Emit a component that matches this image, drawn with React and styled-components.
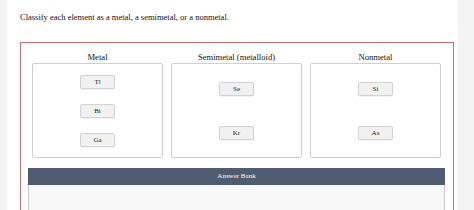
import React from "react";
import styled, { createGlobalStyle } from "styled-components";

const Global = createGlobalStyle`
  html, body { margin: 0; padding: 0; background: #f3f3f3; }
  body {
    font-family: "Liberation Serif", "Times New Roman", serif;
    color: #222;
    -webkit-font-smoothing: antialiased;
  }
`;

const Shell = styled.div`
  display: flex;
  width: 474px;
  height: 210px;
  overflow: hidden;
  background: #f3f3f3;
`;

const Page = styled.div`
  margin-left: 7px;
  width: 451px;
  background: #fff;
  padding: 11px 0 0 13px;
  box-sizing: border-box;
`;

const Title = styled.p`
  margin: 0;
  font-size: 8.5px;
  line-height: 12px;
  color: #111;
`;

const Frame = styled.div`
  margin-top: 19px;
  width: 434px;
  height: 200px;
  box-sizing: border-box;
  border: 1px solid #cf6b72;
  padding: 8px 8px 0 7px;
`;

const Columns = styled.div`
  display: grid;
  grid-template-columns: repeat(3, 131px);
  column-gap: 8px;
  padding-left: 4px;
`;

const Column = styled.div`
  display: flex;
  flex-direction: column;
`;

const Heading = styled.div`
  text-align: center;
  font-size: 8.6px;
  line-height: 12px;
  height: 12px;
  color: #111;
`;

const Zone = styled.div`
  height: 95px;
  box-sizing: border-box;
  border: 1px solid #cfcfcf;
  border-radius: 2px;
  display: flex;
  flex-direction: column;
  align-items: center;
  padding-top: ${(p) => p.$top}px;
  gap: ${(p) => p.$gap}px;
`;

const Tile = styled.div`
  width: 35px;
  height: 14px;
  box-sizing: border-box;
  border: 1px solid #d3d3d3;
  border-radius: 2px;
  background: #f1f1f1;
  box-shadow: 0 1px 1px rgba(0, 0, 0, 0.06);
  font-size: 7px;
  line-height: 12px;
  text-align: center;
  color: #222;
`;

const Bank = styled.div`
  margin-top: 10px;
  width: 417px;
  box-sizing: border-box;
  border: 1px solid #c9c9c9;
  border-top: none;
`;

const BankHeader = styled.div`
  height: 17px;
  background: #4e5b70;
  color: #fff;
  font-size: 7px;
  line-height: 17px;
  text-align: center;
  margin: 0 -1px;
`;

const BankBody = styled.div`
  height: 60px;
  background: #f8f8f8;
`;

const columns = [
  { name: "Metal", items: ["Tl", "Bi", "Ga"], top: 11, gap: 15 },
  { name: "Semimetal (metalloid)", items: ["Se", "Kr"], top: 18, gap: 30 },
  { name: "Nonmetal", items: ["Si", "As"], top: 18, gap: 30 },
];

export default function App() {
  return (
    <>
      <Global />
      <Shell>
        <Page>
          <Title>Classify each element as a metal, a semimetal, or a nonmetal.</Title>
          <Frame>
            <Columns>
              {columns.map((c) => (
                <Column key={c.name}>
                  <Heading>{c.name}</Heading>
                  <Zone $top={c.top} $gap={c.gap}>
                    {c.items.map((i) => (
                      <Tile key={i}>{i}</Tile>
                    ))}
                  </Zone>
                </Column>
              ))}
            </Columns>
            <Bank>
              <BankHeader>Answer Bank</BankHeader>
              <BankBody />
            </Bank>
          </Frame>
        </Page>
      </Shell>
    </>
  );
}
